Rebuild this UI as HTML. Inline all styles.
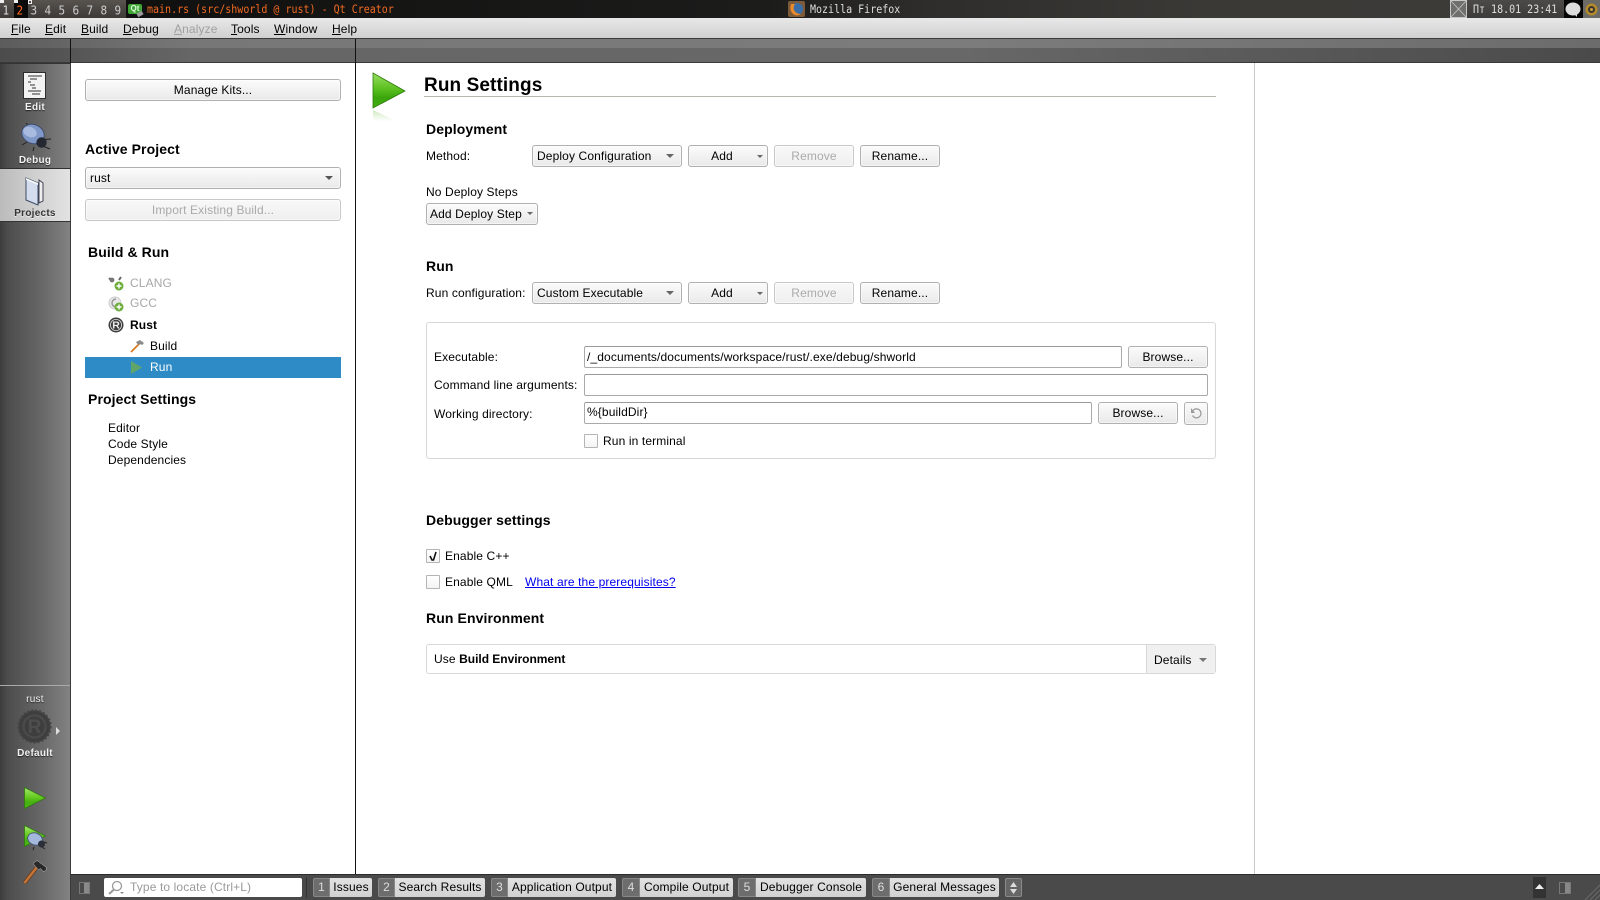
<!DOCTYPE html>
<html><head><meta charset="utf-8"><title>Qt Creator</title>
<style>
html,body{margin:0;padding:0;width:1600px;height:900px;overflow:hidden;background:#fff}
#r{position:relative;width:1600px;height:900px;overflow:hidden;font-family:"Liberation Sans",Arial,sans-serif;font-size:12px;letter-spacing:.12px;color:#000;background:#fff}
#r div,#r span.t,#r svg{position:absolute}
.t{position:absolute;white-space:nowrap;line-height:16px;height:16px}
.b{font-weight:bold;font-size:14px;letter-spacing:.1px}
b{letter-spacing:-.03px}
.m{font-family:"DejaVu Sans Mono","Liberation Mono",monospace;font-size:10px;letter-spacing:0;line-height:18px;height:18px;white-space:nowrap;position:absolute;top:2px;transform:scaleY(1.12)}
.d{font-size:11px;margin-left:-.5px}
.btn{box-sizing:border-box;border:1px solid #b0b0b0;border-radius:3px;background:linear-gradient(#fbfbfb,#e9e9e9);text-align:center;line-height:20px;white-space:nowrap;box-shadow:inset 0 0 0 1px rgba(255,255,255,.5)}
.dis{color:#aaa;border-color:#c8c8c8;background:linear-gradient(#f8f8f8,#efefef)}
.arr{width:0;height:0;border-left:4px solid transparent;border-right:4px solid transparent;border-top:4px solid #555}
.arrs{border-left-width:3px;border-right-width:3px;border-top:3px solid #666}
.inp{box-sizing:border-box;border:1px solid #aaa;border-top-color:#999;border-radius:2px;background:#fff;line-height:20px;padding-left:2px;white-space:nowrap}
.cb{box-sizing:border-box;width:14px;height:14px;border:1px solid #b5b5b5;border-radius:1px;background:linear-gradient(#fff,#f4f4f4)}
.side{font-weight:bold;font-size:10px;letter-spacing:.25px;line-height:12px;height:12px;text-align:center;left:0;width:70px;color:#f2f2f2;text-shadow:0 1px 1px #222}
.n{top:878px;height:19px;box-sizing:border-box;background:#6d6d6d;border:1px solid #888;border-radius:2px 0 0 2px;color:#ddd;text-align:center;line-height:17px;font-size:12px}
.l{top:878px;height:19px;background:linear-gradient(#e2e2e2,#d2d2d2);border-radius:0 2px 2px 0;line-height:19px;font-size:12px;text-align:center;white-space:nowrap;color:#000}
u{text-decoration:underline}
</style></head><body><div id="r">

<!-- top panel -->
<div style="left:0;top:0;width:1600px;height:18px;background:linear-gradient(90deg,#0e0e0e 0,#151514 25%,#1c1c1b 48%,#2e2d2b 58%,#3a3936 75%,#3d3b38 90%,#3a3936 100%)"></div>
<div style="left:0;top:0;width:126px;height:18px;background:linear-gradient(#58534e,#3d3a38)"></div>
<div style="left:14px;top:0;width:14px;height:18px;background:#0a0a0a"></div>
<div style="left:0;top:0;width:4px;height:3px;background:#eee"></div>
<div style="left:14px;top:0;width:4px;height:3px;background:#eee"></div>
<div style="left:28px;top:0;width:4px;height:4px;box-sizing:border-box;border:1px solid #eee"></div>
<span class="m d" style="left:3px;color:#ddd">1</span>
<span class="m d" style="left:17px;color:#ff6a1a">2</span>
<span class="m d" style="left:31px;color:#ccc">3</span>
<span class="m d" style="left:45px;color:#ccc">4</span>
<span class="m d" style="left:59px;color:#ccc">5</span>
<span class="m d" style="left:73px;color:#ccc">6</span>
<span class="m d" style="left:87px;color:#ccc">7</span>
<span class="m d" style="left:101px;color:#ccc">8</span>
<span class="m d" style="left:115px;color:#ccc">9</span>
<div style="left:128px;top:4px;width:14px;height:10px;background:#3fa535;border-radius:2px;color:#dfd;font:bold 8px/10px 'Liberation Sans',sans-serif;text-align:center;letter-spacing:0">Qt</div>
<div style="left:137px;top:12px;width:6px;height:4px;background:#999;transform:rotate(-30deg)"></div>
<span class="m" style="left:147px;color:#f06a22">main.rs (src/shworld @ rust) - Qt Creator</span>
<svg style="left:788px;top:1px" width="17" height="16" viewBox="0 0 17 16"><rect width="17" height="16" rx="2" fill="#7d5a3a"/><circle cx="9" cy="8" r="6" fill="#3a6ea8"/><path d="M3 3 Q1 9 5 13 Q9 16 13 13 Q8 13 6 9 Q5 6 7 3Z" fill="#e98a2b"/></svg>
<span class="m" style="left:810px;color:#ddd">Mozilla Firefox</span>
<div style="left:1450px;top:0;width:17px;height:18px;background:#6f6f6c"></div>
<svg style="left:1450px;top:0" width="17" height="18"><rect x=".5" y=".5" width="16" height="17" fill="none" stroke="#c8c8c8"/><path d="M1 1L16 17M16 1L1 17" stroke="#c8c8c8" stroke-width=".8"/></svg>
<div style="left:1467px;top:0;width:98px;height:18px;background:linear-gradient(#4c4a48,#3e3c3a)"></div>
<span class="m" style="left:1473px;color:#ddd">Пт 18.01 23:41</span>
<div style="left:1564px;top:0;width:19px;height:18px;background:#050505"></div>
<svg style="left:1565px;top:2px" width="16" height="15"><ellipse cx="8" cy="7" rx="7.5" ry="6.5" fill="#ddd"/><path d="M9 12l3 3v-4z" fill="#ddd"/></svg>
<div style="left:1583px;top:0;width:17px;height:18px;background:#6b6a66"></div>
<svg style="left:1584px;top:2px" width="15" height="15"><circle cx="7.5" cy="7.5" r="6" fill="#b48b2a"/><circle cx="7.5" cy="7.5" r="3.5" fill="#3a3530"/><circle cx="7.5" cy="7.5" r="1.5" fill="#c9a040"/></svg>

<!-- menu bar -->
<div style="left:0;top:18px;width:1600px;height:20px;background:linear-gradient(#e8e8e8,#d0d0d0)"></div>
<span class="t" style="left:11px;top:21px"><u>F</u>ile</span>
<span class="t" style="left:45px;top:21px"><u>E</u>dit</span>
<span class="t" style="left:81px;top:21px"><u>B</u>uild</span>
<span class="t" style="left:123px;top:21px"><u>D</u>ebug</span>
<span class="t" style="left:174px;top:21px;color:#a0a0a0"><u>A</u>nalyze</span>
<span class="t" style="left:231px;top:21px"><u>T</u>ools</span>
<span class="t" style="left:274px;top:21px"><u>W</u>indow</span>
<span class="t" style="left:332px;top:21px"><u>H</u>elp</span>

<!-- toolbar -->
<div style="left:0;top:38px;width:1600px;height:1px;background:#3c3c3c"></div>
<div style="left:0;top:39px;width:1600px;height:9px;background:linear-gradient(90deg,#5c5c5c 0,#777 12%,#7c7c7c 60%,#6c6c6c 100%)"></div>
<div style="left:0;top:48px;width:1600px;height:14px;background:linear-gradient(90deg,#4c4c4c 0,#666 12%,#686868 60%,#4a4a4a 100%)"></div>
<div style="left:0;top:62px;width:1600px;height:1px;background:#3a3a3a"></div>
<div style="left:70px;top:39px;width:1px;height:24px;background:#111"></div>
<div style="left:355px;top:39px;width:1px;height:24px;background:#111"></div>

<!-- left sidebar -->
<div style="left:0;top:63px;width:70px;height:837px;background:linear-gradient(90deg,#3c3c3c 0,#4c4c4c 10%,#686868 60%,#828282 100%)"></div>
<div style="left:70px;top:63px;width:1px;height:837px;background:#3a3a3a"></div>
<div style="left:0;top:63px;width:70px;height:1px;background:#333"></div>

<!-- Edit icon -->
<svg style="left:23px;top:72px" width="24" height="28" viewBox="0 0 24 28"><rect x=".5" y=".5" width="22" height="26" fill="#f3f3f3" stroke="#2d2d2d"/><path d="M5 4h14M7 7h7M5 10h3M7 13h5M9 16h4M5 19h13M9 22h8" stroke="#333" stroke-width="1"/></svg>
<div class="side" style="top:102px">Edit</div>
<!-- Debug icon -->
<svg style="left:21px;top:123px" width="32" height="29" viewBox="0 0 32 29"><path d="M16 17l14-1M17 21l12 5M13 24l-1 4M6 19l-5 3M8 3L5 0" stroke="#222" stroke-width="1"/><ellipse cx="12" cy="11" rx="11.5" ry="9.5" transform="rotate(22 12 11)" fill="#7f98c8" stroke="#3f4c68"/><ellipse cx="9" cy="9" rx="7" ry="5" transform="rotate(22 9 9)" fill="#a9bcdf"/><circle cx="20.5" cy="19.5" r="5.2" fill="#242832"/></svg>
<div class="side" style="top:155px">Debug</div>
<!-- Projects tab -->
<div style="left:0;top:168px;width:70px;height:1px;background:#2f2f2f"></div>
<div style="left:0;top:169px;width:70px;height:52px;background:linear-gradient(90deg,#bbb 0,#d0d0d0 50%,#e2e2e2 100%)"></div>
<div style="left:0;top:221px;width:70px;height:1px;background:#333"></div>
<svg style="left:25px;top:177px" width="20" height="30" viewBox="0 0 20 30"><path d="M14 3l4 3v18l-4 2z" fill="#eee" stroke="#445"/><path d="M1 1l12 5v22L1 23z" fill="#d3ddee" stroke="#3c4a63"/><path d="M1 1l12 5v2L1 3z" fill="#f4f7fc"/></svg>
<div class="side" style="top:208px;color:#333;text-shadow:0 1px 0 #eee">Projects</div>
<!-- Kit selector -->
<div style="left:0;top:685px;width:70px;height:1px;background:#aaa"></div>
<div class="side" style="top:694px;font-weight:normal;font-size:10px">rust</div>
<svg style="left:17px;top:709px" width="35" height="35" viewBox="0 0 35 35"><circle cx="17.5" cy="17.5" r="16" fill="#3e3e3e" stroke="#454545" stroke-width="2.4" stroke-dasharray="2 2"/><circle cx="17.5" cy="17.5" r="11" fill="none" stroke="#4a4a4a" stroke-width="2.4"/><text x="17.5" y="24" text-anchor="middle" font-family="Liberation Sans" font-weight="bold" font-size="19" fill="#4e4e4e">R</text></svg>
<div style="left:56px;top:727px;width:0;height:0;border-top:4px solid transparent;border-bottom:4px solid transparent;border-left:4px solid #ddd"></div>
<div class="side" style="top:748px">Default</div>
<!-- Run -->
<svg style="left:23px;top:786px" width="24" height="24" viewBox="0 0 24 24"><defs><linearGradient id="g1" x1="0" y1="0" x2="0" y2="1"><stop offset="0" stop-color="#a8e870"/><stop offset=".45" stop-color="#66cc22"/><stop offset=".7" stop-color="#45b010"/><stop offset="1" stop-color="#4cb81a"/></linearGradient></defs><path d="M1.5 1.5L22.5 12 1.5 22.5z" fill="url(#g1)" stroke="#2f7a0c" stroke-width=".8"/></svg>
<!-- Debug run -->
<svg style="left:23px;top:824px" width="26" height="27" viewBox="0 0 26 27"><path d="M1.5 1.5L22.5 12 1.5 22.5z" fill="url(#g1)" stroke="#2f7a0c" stroke-width=".8"/><path d="M17 17l7 2M16 21l6 4M11 23l-1 3" stroke="#222"/><ellipse cx="12" cy="15" rx="7.5" ry="6" transform="rotate(20 12 15)" fill="#a3b8dc" stroke="#4a5876"/><circle cx="18.5" cy="20" r="3.5" fill="#2a2f3a"/></svg>
<!-- Hammer -->
<svg style="left:22px;top:859px" width="26" height="26" viewBox="0 0 26 26"><path d="M2.5 24L15 8" stroke="#6b3a17" stroke-width="4"/><path d="M2.5 24L15 8" stroke="#c4753a" stroke-width="2.4"/><path d="M11 4.5l4-3 9.5 7-.5 3-2.5 1-3-3-2 1.5z" fill="#2a2a2a" stroke="#bbb" stroke-width=".5"/></svg>

<!-- main white area -->
<div style="left:355px;top:63px;width:1px;height:811px;background:#111"></div>
<div style="left:1254px;top:63px;width:1px;height:811px;background:#c8c8c8"></div>

<!-- left panel -->
<div class="btn" style="left:85px;top:79px;width:256px;height:22px">Manage Kits...</div>
<span class="t b" style="left:85px;top:141px">Active Project</span>
<div class="btn" style="left:85px;top:167px;width:256px;height:22px;text-align:left;padding-left:4px">rust</div>
<div class="arr" style="left:325px;top:176px"></div>
<div class="btn dis" style="left:85px;top:199px;width:256px;height:22px">Import Existing Build...</div>
<span class="t b" style="left:88px;top:244px">Build &amp; Run</span>

<svg style="left:108px;top:275px" width="16" height="16" viewBox="0 0 16 16"><path d="M1 3l3 3M13 2l-2 3" stroke="#666" stroke-width="2"/><circle cx="4" cy="5" r="2.4" fill="#777"/><circle cx="11" cy="11" r="4.5" fill="#6eae3c"/><path d="M11 8.5v5M8.5 11h5" stroke="#fff" stroke-width="1.4"/></svg>
<span class="t" style="left:130px;top:275px;color:#a8a8a8">CLANG</span>
<svg style="left:108px;top:296px" width="16" height="16" viewBox="0 0 16 16"><circle cx="7" cy="7" r="6" fill="#e8e8e8" stroke="#ccc"/><path d="M8 3a4 4 0 0 0 0 8" fill="none" stroke="#999" stroke-width="1.5"/><circle cx="11" cy="11" r="4.5" fill="#6eae3c"/><path d="M11 8.5v5M8.5 11h5" stroke="#fff" stroke-width="1.4"/></svg>
<span class="t" style="left:130px;top:295px;color:#a8a8a8">GCC</span>
<svg style="left:108px;top:317px" width="16" height="16" viewBox="0 0 16 16"><circle cx="8" cy="8" r="7.5" fill="#3c3c3c"/><circle cx="8" cy="8" r="5.6" fill="none" stroke="#ddd" stroke-width=".8"/><text x="8" y="11.6" text-anchor="middle" font-family="Liberation Sans" font-weight="bold" font-size="10.5" fill="#eee" letter-spacing="0">R</text></svg>
<span class="t" style="left:130px;top:317px;font-weight:bold">Rust</span>
<svg style="left:130px;top:339px" width="15" height="14" viewBox="0 0 15 14"><path d="M1 13L10 4" stroke="#d97a20" stroke-width="1.8"/><path d="M6 3l4-2 4 3-2 2-2-1-2 1z" fill="#8a8a8a"/></svg>
<span class="t" style="left:150px;top:338px">Build</span>
<div style="left:85px;top:357px;width:256px;height:21px;background:#2e8bc6"></div>
<svg style="left:131px;top:360px" width="12" height="15"><path d="M0 1L11 7.5 0 14z" fill="#5fa56a"/></svg>
<span class="t" style="left:150px;top:359px;color:#fff">Run</span>
<span class="t b" style="left:88px;top:391px">Project Settings</span>
<span class="t" style="left:108px;top:420px">Editor</span>
<span class="t" style="left:108px;top:436px">Code Style</span>
<span class="t" style="left:108px;top:452px">Dependencies</span>

<!-- Run settings -->
<svg style="left:372px;top:72px" width="36" height="50" viewBox="0 0 36 50"><defs><linearGradient id="g2" x1="0" y1="0" x2="0" y2="1"><stop offset="0" stop-color="#96de60"/><stop offset=".45" stop-color="#5cc020"/><stop offset=".7" stop-color="#3aa60c"/><stop offset="1" stop-color="#42ac12"/></linearGradient><linearGradient id="g3" x1="0" y1="0" x2="0" y2="1"><stop offset="0" stop-color="#cfe8c0"/><stop offset="1" stop-color="#fff"/></linearGradient></defs><path d="M1 1L33 19 1 36z" fill="url(#g2)" stroke="#2f7a0c" stroke-width=".8"/><path d="M1 38L24 49H1z" fill="url(#g3)"/></svg>
<span class="t" style="left:424px;top:76px;font-weight:bold;font-size:19px;line-height:20px;height:20px;letter-spacing:.1px">Run Settings</span>
<div style="left:424px;top:96px;width:792px;height:1px;background:#b8b5ae"></div>

<span class="t b" style="left:426px;top:121px">Deployment</span>
<span class="t" style="left:426px;top:148px">Method:</span>
<div class="btn" style="left:532px;top:145px;width:150px;height:22px;text-align:left;padding-left:4px">Deploy Configuration</div>
<div class="arr" style="left:666px;top:154px;border-top-color:#666"></div>
<div class="btn" style="left:688px;top:145px;width:80px;height:22px;padding-right:12px">Add</div>
<div class="arr arrs" style="left:757px;top:155px"></div>
<div class="btn dis" style="left:774px;top:145px;width:80px;height:22px">Remove</div>
<div class="btn" style="left:860px;top:145px;width:80px;height:22px">Rename...</div>

<span class="t" style="left:426px;top:184px">No Deploy Steps</span>
<div class="btn" style="left:426px;top:203px;width:112px;height:22px;text-align:left;padding-left:3px">Add Deploy Step</div>
<div class="arr arrs" style="left:527px;top:212px"></div>

<span class="t b" style="left:426px;top:258px">Run</span>
<span class="t" style="left:426px;top:285px">Run configuration:</span>
<div class="btn" style="left:532px;top:282px;width:150px;height:22px;text-align:left;padding-left:4px">Custom Executable</div>
<div class="arr" style="left:666px;top:291px;border-top-color:#666"></div>
<div class="btn" style="left:688px;top:282px;width:80px;height:22px;padding-right:12px">Add</div>
<div class="arr arrs" style="left:757px;top:292px"></div>
<div class="btn dis" style="left:774px;top:282px;width:80px;height:22px">Remove</div>
<div class="btn" style="left:860px;top:282px;width:80px;height:22px">Rename...</div>

<div style="left:426px;top:322px;width:790px;height:137px;box-sizing:border-box;border:1px solid #d8d8d8;border-radius:3px"></div>
<span class="t" style="left:434px;top:349px">Executable:</span>
<div class="inp" style="left:584px;top:346px;width:538px;height:22px">/_documents/documents/workspace/rust/.exe/debug/shworld</div>
<div class="btn" style="left:1128px;top:346px;width:80px;height:22px">Browse...</div>
<span class="t" style="left:434px;top:377px">Command line arguments:</span>
<div class="inp" style="left:584px;top:374px;width:624px;height:22px"></div>
<span class="t" style="left:434px;top:406px">Working directory:</span>
<div class="inp" style="left:584px;top:402px;width:508px;height:22px;line-height:19px">%{buildDir}</div>
<div class="btn" style="left:1098px;top:402px;width:80px;height:22px">Browse...</div>
<div class="btn" style="left:1184px;top:402px;width:24px;height:23px"></div>
<svg style="left:1190px;top:407px" width="13" height="13" viewBox="0 0 13 13"><path d="M3 3.5a4.5 4.5 0 1 1-.5 5" fill="none" stroke="#999" stroke-width="1.2"/><path d="M1 1v5h4z" fill="#999"/></svg>
<div class="cb" style="left:584px;top:434px"></div>
<span class="t" style="left:603px;top:433px">Run in terminal</span>

<span class="t b" style="left:426px;top:512px">Debugger settings</span>
<div class="cb" style="left:426px;top:549px"></div>
<svg style="left:426px;top:549px" width="14" height="14"><path d="M4 7l2 4 1.5 0L10 3" fill="none" stroke="#111" stroke-width="1.6"/></svg>
<span class="t" style="left:445px;top:548px">Enable C++</span>
<div class="cb" style="left:426px;top:575px"></div>
<span class="t" style="left:445px;top:574px">Enable QML</span>
<span class="t" style="left:525px;top:574px;color:#0000ee;text-decoration:underline">What are the prerequisites?</span>
<span class="t b" style="left:426px;top:610px">Run Environment</span>

<div style="left:426px;top:644px;width:790px;height:30px;box-sizing:border-box;border:1px solid #d8d8d8;border-radius:3px"></div>
<div style="left:1146px;top:645px;width:69px;height:28px;background:#f0f0f0;border-left:1px solid #d8d8d8;box-sizing:border-box"></div>
<span class="t" style="left:434px;top:651px">Use <b>Build Environment</b></span>
<span class="t" style="left:1154px;top:652px">Details</span>
<div class="arr" style="left:1199px;top:658px;border-top-color:#777"></div>

<!-- bottom bar -->
<div style="left:71px;top:874px;width:1529px;height:1px;background:#2c2c2c"></div>
<div style="left:71px;top:875px;width:1529px;height:25px;background:#4a4a4a"></div>
<svg style="left:79px;top:882px" width="11" height="12"><rect x=".5" y=".5" width="10" height="11" fill="#8a8a8a" stroke="#777"/><rect x="1" y="1" width="4" height="10" fill="#4a4a4a"/></svg>
<div style="left:104px;top:878px;width:198px;height:19px;background:#fff;border-radius:2px"></div>
<svg style="left:108px;top:880px" width="18" height="15" viewBox="0 0 18 15"><circle cx="9" cy="6" r="4.5" fill="none" stroke="#999" stroke-width="1.3"/><path d="M6 9.5L1 14" stroke="#999" stroke-width="2"/><path d="M12 12h4l-2 2z" fill="#888"/></svg>
<span class="t" style="left:130px;top:879px;color:#9a9a9a">Type to locate (Ctrl+L)</span>
<div style="left:306px;top:877px;width:1px;height:21px;background:#333"></div>

<div class="n" style="left:313px;width:17px">1</div><div class="l" style="left:330px;width:42px">Issues</div>
<div class="n" style="left:378px;width:17px">2</div><div class="l" style="left:395px;width:90px">Search Results</div>
<div class="n" style="left:491px;width:17px">3</div><div class="l" style="left:508px;width:108px">Application Output</div>
<div class="n" style="left:622px;width:18px">4</div><div class="l" style="left:640px;width:93px">Compile Output</div>
<div class="n" style="left:738px;width:18px">5</div><div class="l" style="left:756px;width:110px">Debugger Console</div>
<div class="n" style="left:872px;width:18px">6</div><div class="l" style="left:890px;width:109px">General Messages</div>
<div style="left:1005px;top:878px;width:17px;height:19px;box-sizing:border-box;background:#666;border:1px solid #8a8a8a;border-radius:2px"></div>
<svg style="left:1009px;top:881px" width="9" height="14"><path d="M1 6L4.5 1 8 6zM1 8L4.5 13 8 8z" fill="#ddd"/></svg>
<div style="left:1533px;top:877px;width:13px;height:21px;background:#333"></div>
<svg style="left:1535px;top:884px" width="9" height="6"><path d="M0 5L4.5 0 9 5z" fill="#eee"/></svg>
<svg style="left:1559px;top:882px" width="12" height="12"><rect x=".5" y=".5" width="11" height="11" fill="#888" stroke="#777"/><rect x="1" y="1" width="5" height="10" fill="#4a4a4a"/></svg>
<svg style="left:1584px;top:884px" width="16" height="16"><path d="M16 1L1 16M16 6L6 16M16 11L11 16" stroke="#6a6a6a" stroke-width="1"/></svg>

</div></body></html>
